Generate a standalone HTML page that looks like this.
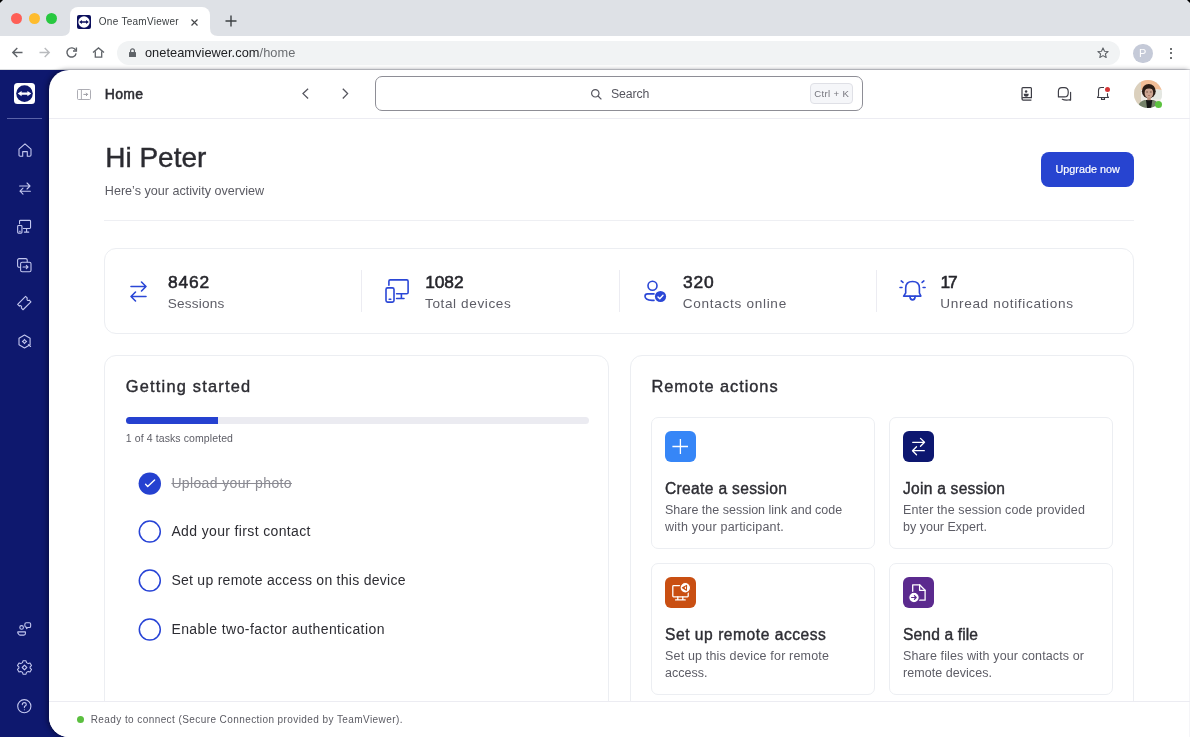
<!DOCTYPE html>
<html><head><meta charset="utf-8"><style>
*{margin:0;padding:0;box-sizing:border-box}
html,body{width:1190px;height:737px;overflow:hidden;background:#fff;font-family:"Liberation Sans",sans-serif;position:relative}
.a{position:absolute}
.t{white-space:nowrap}
svg.a{display:block;overflow:visible}
.med{-webkit-text-stroke:0.4px currentColor}
</style></head><body>
<div id="wrap" style="position:absolute;left:0;top:0;width:1190px;height:737px;will-change:transform">
<div class="a" style="left:0px;top:0px;width:1190px;height:36px;background:#dee1e6"></div>
<div class="a" style="left:0px;top:0px;width:3px;height:3px;background:#000;clip-path:polygon(0 0,100% 0,0 100%)"></div>
<div class="a" style="left:1187px;top:0px;width:3px;height:3px;background:#000;clip-path:polygon(0 0,100% 0,100% 100%)"></div>
<div class="a" style="left:11.0px;top:13px;width:11px;height:11px;background:#fe5f57;border-radius:50%"></div>
<div class="a" style="left:28.5px;top:13px;width:11px;height:11px;background:#febc2e;border-radius:50%"></div>
<div class="a" style="left:46.0px;top:13px;width:11px;height:11px;background:#28c840;border-radius:50%"></div>
<div class="a" style="left:70px;top:7px;width:140px;height:30px;background:#fff;border-radius:8px 8px 0 0"></div>
<svg class="a" style="left:62px;top:28px;" width="8" height="8" viewBox="0 0 8 8" fill="none"><path d="M0 8 Q8 8 8 0 V8 Z" fill="#fff"/></svg>
<svg class="a" style="left:210px;top:28px;" width="8" height="8" viewBox="0 0 8 8" fill="none"><path d="M8 8 Q0 8 0 0 V8 Z" fill="#fff"/></svg>
<svg class="a" style="left:77px;top:15px;" width="14" height="14" viewBox="0 0 14 14" fill="none"><rect width="14" height="14" rx="2" fill="#0b0f5c"/><circle cx="7" cy="7" r="5.7" fill="#fff"/><path d="M2.2 7 L4.9 4.9 V6.2 H9.1 V4.9 L11.8 7 L9.1 9.1 V7.8 H4.9 V9.1 Z" fill="#0b0f5c"/></svg>
<div class="a t " style="left:98.8px;top:16.84px;font-size:10px;line-height:10px;color:#3c4043;font-weight:400;letter-spacing:0.27px;">One TeamViewer</div>
<svg class="a" style="left:191px;top:19px;" width="7" height="7" viewBox="0 0 7 7" fill="none"><path d="M0.5 0.5 L6.5 6.5 M6.5 0.5 L0.5 6.5" stroke="#45474a" stroke-width="1.2"/></svg>
<svg class="a" style="left:225px;top:15px;" width="12" height="12" viewBox="0 0 12 12" fill="none"><path d="M6 0.5 V11.5 M0.5 6 H11.5" stroke="#3c4043" stroke-width="1.4"/></svg>
<div class="a" style="left:0px;top:36px;width:1190px;height:33px;background:#fff"></div>
<div class="a" style="left:0px;top:69px;width:1190px;height:1px;background:#dadcdf"></div>
<svg class="a" style="left:12px;top:47px;" width="11" height="11" viewBox="0 0 11 11" fill="none"><path d="M10.5 5.5 H1 M5.3 1 L0.8 5.5 L5.3 10" stroke="#5f6368" stroke-width="1.4"/></svg>
<svg class="a" style="left:39px;top:47px;" width="11" height="11" viewBox="0 0 11 11" fill="none"><path d="M0.5 5.5 H10 M5.7 1 L10.2 5.5 L5.7 10" stroke="#b9bbbe" stroke-width="1.4"/></svg>
<svg class="a" style="left:66px;top:47px;" width="11" height="11" viewBox="0 0 11 11" fill="none"><path d="M9.6 3.2 A4.6 4.6 0 1 0 10.1 6.3" stroke="#5f6368" stroke-width="1.4"/><path d="M10.4 0.6 V4 H7" stroke="#5f6368" stroke-width="1.4"/></svg>
<svg class="a" style="left:92px;top:47px;" width="13" height="12" viewBox="0 0 13 12" fill="none"><path d="M1 5.6 L6.5 0.9 L12 5.6" stroke="#5f6368" stroke-width="1.3"/><path d="M3.3 4.2 V10.1 H9.7 V4.2" stroke="#5f6368" stroke-width="1.3"/></svg>
<div class="a" style="left:117px;top:41px;width:1002.5px;height:24px;background:#f1f3f4;border-radius:12px"></div>
<svg class="a" style="left:129px;top:48px;" width="7" height="9" viewBox="0 0 7 9" fill="none"><path d="M1.6 4 V2.8 A1.9 1.9 0 0 1 5.4 2.8 V4" stroke="#5f6368" stroke-width="1.2"/><rect x="0" y="4" width="7" height="5" rx="0.6" fill="#5f6368"/></svg>
<div class="a t " style="left:144.9px;top:47.16px;font-size:12.8px;line-height:12.8px;color:#202124;font-weight:400;letter-spacing:0.05px;">oneteamviewer.com<span style="color:#6b6e72">/home</span></div>
<svg class="a" style="left:1097px;top:47px;" width="12" height="12" viewBox="0 0 12 12" fill="none"><path d="M6 0.9 L7.5 4.2 L11.1 4.5 L8.4 6.9 L9.2 10.5 L6 8.6 L2.8 10.5 L3.6 6.9 L0.9 4.5 L4.5 4.2 Z" stroke="#5f6368" stroke-width="1.1" stroke-linejoin="round"/></svg>
<div class="a" style="left:1133.2px;top:43.5px;width:19.5px;height:19.5px;background:#c5cad8;border-radius:50%"></div>
<div class="a t " style="left:1138.9px;top:47.99px;font-size:11px;line-height:11px;color:#fff;font-weight:400;letter-spacing:0px;">P</div>
<div class="a" style="left:1169.5px;top:47.5px;width:2px;height:2px;background:#3c4043;border-radius:50%"></div>
<div class="a" style="left:1169.5px;top:52px;width:2px;height:2px;background:#3c4043;border-radius:50%"></div>
<div class="a" style="left:1169.5px;top:56.5px;width:2px;height:2px;background:#3c4043;border-radius:50%"></div>
<div class="a" style="left:0px;top:70px;width:100px;height:667px;background:#0e186e"></div>
<svg class="a" style="left:14px;top:83px;" width="21" height="21" viewBox="0 0 21 21" fill="none"><rect width="21" height="21" rx="3.5" fill="#fff"/><circle cx="10.5" cy="10.6" r="8.3" fill="#0e186e"/><path d="M3.7 10.6 L7.6 7.9 V9.4 H13.4 V7.9 L17.3 10.6 L13.4 13.3 V11.8 H7.6 V13.3 Z" fill="#fff"/></svg>
<div class="a" style="left:7px;top:118px;width:35px;height:1px;background:#5a62a8"></div>
<svg class="a" style="left:17.5px;top:142.5px;" width="14" height="14" viewBox="0 0 14 14" fill="none"><path d="M1 6.2 L7 0.8 L13 6.2 V12 Q13 13.2 11.8 13.2 H9.3 V8.6 H4.7 V13.2 H2.2 Q1 13.2 1 12 Z" stroke="#c3c7ef" stroke-width="1.1" stroke-linecap="round" stroke-linejoin="round"/></svg>
<svg class="a" style="left:18.5px;top:182px;" width="12" height="13" viewBox="0 0 12 13" fill="none"><path d="M0.6 4 H11 M8 1 L11 4 L8 7 M11.4 9.2 H1 M4 6.2 L1 9.2 L4 12.2" stroke="#c3c7ef" stroke-width="1.1" stroke-linecap="round" stroke-linejoin="round"/></svg>
<svg class="a" style="left:17px;top:219px;" width="16" height="16" viewBox="0 0 16 16" fill="none"><path d="M2.55 4.8 V2.2 Q2.55 1.35 3.4 1.35 H12.7 Q13.55 1.35 13.55 2.2 V8.6 Q13.55 9.45 12.7 9.45 H6.3" stroke="#c3c7ef" stroke-width="1.1" stroke-linecap="round" stroke-linejoin="round"/><path d="M9.6 9.6 V12.9 M7.4 13.1 H11.8" stroke="#c3c7ef" stroke-width="1.1" stroke-linecap="round" stroke-linejoin="round"/><rect x="0.65" y="6.55" width="4.3" height="7.6" rx="0.9" stroke="#c3c7ef" stroke-width="1.1" stroke-linecap="round" stroke-linejoin="round"/><path d="M2.3 12.3 H3.3" stroke="#c3c7ef" stroke-width="1.1" stroke-linecap="round" stroke-linejoin="round"/></svg>
<svg class="a" style="left:17px;top:258px;" width="15" height="15" viewBox="0 0 15 15" fill="none"><rect x="0.6" y="0.6" width="9.6" height="8.6" rx="1.5" stroke="#c3c7ef" stroke-width="1.1" stroke-linecap="round" stroke-linejoin="round"/><rect x="3.6" y="4.2" width="10.4" height="9.6" rx="1.5" fill="#0e186e" stroke="#c3c7ef" stroke-width="1.1" stroke-linecap="round" stroke-linejoin="round"/><path d="M6 9 H11 M9.3 7.3 L11 9 L9.3 10.7" stroke="#c3c7ef" stroke-width="1.1" stroke-linecap="round" stroke-linejoin="round"/></svg>
<svg class="a" style="left:16px;top:295px;" width="16" height="16" viewBox="0 0 16 16" fill="none"><path transform="translate(8.3 8.1) rotate(-45)" d="M-5.6 -3.8 H5.6 V-1.3 A1.3 1.3 0 0 0 5.6 1.3 V3.8 H-5.6 V1.3 A1.3 1.3 0 0 0 -5.6 -1.3 Z" stroke="#c3c7ef" stroke-width="1.1" stroke-linecap="round" stroke-linejoin="round"/></svg>
<svg class="a" style="left:18px;top:334px;" width="14" height="16" viewBox="0 0 14 16" fill="none"><path d="M6.5 1 L12.1 4.2 V10.8 L6.5 14 L1 10.8 V4.2 Z" stroke="#c3c7ef" stroke-width="1.1" stroke-linecap="round" stroke-linejoin="round"/><path d="M6.5 5.4 Q7.2 6.8 8.6 7.5 Q7.2 8.2 6.5 9.6 Q5.8 8.2 4.4 7.5 Q5.8 6.8 6.5 5.4 Z" stroke="#c3c7ef" stroke-width="1.1" stroke-linecap="round" stroke-linejoin="round"/><path d="M10.4 10.6 L12.6 12.5" stroke="#c3c7ef" stroke-width="1.1" stroke-linecap="round" stroke-linejoin="round"/></svg>
<svg class="a" style="left:17px;top:621px;" width="15" height="15" viewBox="0 0 15 15" fill="none"><circle cx="4.6" cy="6.4" r="1.8" stroke="#c3c7ef" stroke-width="1.1" stroke-linecap="round" stroke-linejoin="round"/><path d="M0.8 10.9 H8.4 V12.6 Q8.4 14.1 6.9 14.1 H3 Q2.2 14.1 1.7 13.3 L0.8 11.9 Z" stroke="#c3c7ef" stroke-width="1.1" stroke-linecap="round" stroke-linejoin="round"/><path d="M9.4 1.75 H12.3 Q13.65 1.75 13.65 3.1 V5.2 Q13.65 6.55 12.3 6.55 H10.6 L9.6 7.6 V6.4 Q7.85 6 7.85 4.4 V3.3 Q7.85 1.75 9.4 1.75 Z" stroke="#c3c7ef" stroke-width="1.1" stroke-linecap="round" stroke-linejoin="round"/></svg>
<svg class="a" style="left:17px;top:660px;" width="15" height="15" viewBox="0 0 15 15" fill="none"><path d="M6 0.8 H9 L9.5 2.6 L11.2 3.6 L13 3 L14.5 5.6 L13.1 6.9 V8.1 L14.5 9.4 L13 12 L11.2 11.4 L9.5 12.4 L9 14.2 H6 L5.5 12.4 L3.8 11.4 L2 12 L0.5 9.4 L1.9 8.1 V6.9 L0.5 5.6 L2 3 L3.8 3.6 L5.5 2.6 Z" stroke="#c3c7ef" stroke-width="1.1" stroke-linecap="round" stroke-linejoin="round"/><path d="M7.5 5.2 L9.8 7.5 L7.5 9.8 L5.2 7.5 Z" stroke="#c3c7ef" stroke-width="1.1" stroke-linecap="round" stroke-linejoin="round"/></svg>
<svg class="a" style="left:17px;top:699px;" width="15" height="15" viewBox="0 0 15 15" fill="none"><circle cx="7.3" cy="7.2" r="6.6" stroke="#c3c7ef" stroke-width="1.1" stroke-linecap="round" stroke-linejoin="round"/><path d="M5.3 5.6 Q5.3 3.6 7.3 3.6 Q9.3 3.6 9.3 5.4 Q9.3 6.6 7.4 7.4 V8.6" stroke="#c3c7ef" stroke-width="1.1" stroke-linecap="round" stroke-linejoin="round"/><circle cx="7.4" cy="10.8" r="0.5" fill="#c3c7ef"/></svg>
<div class="a" style="left:49px;top:70px;width:1141px;height:667px;background:#fff;border-radius:20px 0 0 20px;box-shadow:-2px 0 5px rgba(0,0,20,.45)"></div>
<div class="a" style="left:1189px;top:70px;width:1px;height:667px;background:#f5f5f8"></div>
<div class="a" style="left:49px;top:118px;width:1141px;height:1px;background:#ececf2"></div>
<svg class="a" style="left:77px;top:88.5px;" width="14" height="11" viewBox="0 0 14 11" fill="none"><rect x="0.5" y="0.5" width="13" height="10" rx="1" stroke="#a4a4ac" stroke-width="0.9"/><path d="M4.4 0.5 V10.5" stroke="#a4a4ac" stroke-width="0.9"/><path d="M6.4 5.4 H10.6 M9 3.8 L10.6 5.4 L9 7" stroke="#8e8e96" stroke-width="0.9"/></svg>
<div class="a t " style="left:104.8px;top:86.55px;font-size:14px;line-height:14px;color:#2d2d33;font-weight:400;letter-spacing:0.3px;-webkit-text-stroke:0.5px #2d2d33">Home</div>
<svg class="a" style="left:301.5px;top:88px;" width="7" height="11" viewBox="0 0 7 11" fill="none"><path d="M6.1 0.7 L1 5.6 L6.1 10.5" stroke="#55555e" stroke-width="1.3"/></svg>
<svg class="a" style="left:341.5px;top:88px;" width="7" height="11" viewBox="0 0 7 11" fill="none"><path d="M0.8 0.7 L5.6 5.6 L0.8 10.5" stroke="#55555e" stroke-width="1.3"/></svg>
<div class="a" style="left:375px;top:76px;width:488px;height:35px;border:1px solid #8e8e96;border-radius:7px;background:#fff"></div>
<svg class="a" style="left:590.5px;top:88.5px;" width="11" height="11" viewBox="0 0 11 11" fill="none"><circle cx="4.3" cy="4.3" r="3.7" stroke="#55555e" stroke-width="1.2"/><path d="M7 7 L10.4 10.4" stroke="#55555e" stroke-width="1.2"/></svg>
<div class="a t " style="left:610.9px;top:87.59px;font-size:12.3px;line-height:12.3px;color:#55555e;font-weight:400;letter-spacing:-0.1px;">Search</div>
<div class="a" style="left:810px;top:83px;width:42.5px;height:21px;border:1px solid #dfe0e6;border-radius:4px;background:#f5f6f9"></div>
<div class="a t " style="left:814.2px;top:89.27px;font-size:9.6px;line-height:9.6px;color:#75757d;font-weight:400;letter-spacing:0.35px;">Ctrl + K</div>
<svg class="a" style="left:1021px;top:87px;" width="11" height="14" viewBox="0 0 11 14" fill="none"><path d="M1 12 V1.5 Q1 0.6 1.9 0.6 H9.6 Q10.4 0.6 10.4 1.5 V10.6 H2.2 Q1 10.6 1 11.8 Q1 13.2 2.2 13.2 H10.4" stroke="#3d3d45" stroke-width="1.2"/><circle cx="5.1" cy="4.5" r="1.25" fill="#3d3d45"/><path d="M2.7 6.8 H7.7 Q7.7 9.8 5.2 9.8 Q2.7 9.8 2.7 6.8 Z" fill="#3d3d45"/></svg>
<svg class="a" style="left:1057px;top:87px;" width="15" height="15" viewBox="0 0 15 15" fill="none"><path d="M1.4 9.9 V4.3 Q1.4 0.6 5 0.6 H7.4 Q11.2 0.6 11.2 4.6 V5.9 Q11.2 9.9 7.4 9.9 Z" stroke="#3d3d45" stroke-width="1.15" stroke-linejoin="round"/><path d="M13.6 5.2 V12.9 Q13.6 13.3 13.1 13.2 L12.4 12.7 Q11.4 13.1 9.6 13.1 Q6.9 13.1 5.3 12.3" stroke="#3d3d45" stroke-width="1.15" stroke-linecap="round" stroke-linejoin="round"/></svg>
<svg class="a" style="left:1096px;top:86px;" width="15" height="15" viewBox="0 0 15 15" fill="none"><path d="M8 1.5 H5.2 Q2.5 1.5 2.5 4.4 V9.8 L1.5 11.5 H12.5 L11.5 10.2 V7.3" stroke="#3d3d45" stroke-width="1.1" stroke-linejoin="round"/><path d="M5.5 11.5 V13.4 H8.5 V11.5" stroke="#3d3d45" stroke-width="1.1"/></svg>
<div class="a" style="left:1104.6px;top:86.6px;width:5.6px;height:5.6px;background:#d43535;border-radius:50%"></div>
<svg class="a" style="left:1134px;top:80px;" width="28" height="28" viewBox="0 0 28 28" fill="none"><defs><clipPath id="av"><circle cx="14" cy="14" r="14"/></clipPath></defs>
<g clip-path="url(#av)"><rect width="28" height="28" fill="#eeebe5"/><rect x="0" y="0" width="7" height="24" fill="#dbd0bd"/><path d="M7 0 H28 V10 Q20 8 7 10 Z" fill="#f2bd96"/><rect x="19" y="10" width="9" height="9" fill="#e4e7e2"/>
<path d="M3 28 Q5 21.5 10.5 20 H19.5 Q24 21 26 28 Z" fill="#748169"/><path d="M12 20 H18.3 L17.2 28 H13 Z" fill="#141414"/>
<ellipse cx="14.8" cy="11.2" rx="6.9" ry="7.3" fill="#2a1c15"/>
<ellipse cx="14.9" cy="12.9" rx="4.3" ry="5.6" fill="#cca592"/><path d="M10.6 9.8 Q15 7.4 19.2 9.6 Q18.6 6.6 14.9 6.4 Q11.2 6.6 10.6 9.8 Z" fill="#2a1c15"/><rect x="13.2" y="17.6" width="3.6" height="2.6" fill="#b98f7a"/><path d="M12.2 12 H14 M15.9 12 H17.7" stroke="#6e5044" stroke-width="0.9"/><path d="M14 15.6 H16" stroke="#a8705e" stroke-width="0.8"/></g></svg>
<div class="a" style="left:1155px;top:101px;width:7px;height:7px;background:#5cc23f;border-radius:50%"></div>
<div class="a t " style="left:105.2px;top:143.70px;font-size:28px;line-height:28px;color:#2b2b31;font-weight:400;letter-spacing:0px;-webkit-text-stroke:0.4px #2b2b31">Hi Peter</div>
<div class="a t " style="left:104.8px;top:184.93px;font-size:12.6px;line-height:12.6px;color:#5b5b63;font-weight:400;letter-spacing:0px;">Here’s your activity overview</div>
<div class="a" style="left:1041px;top:152px;width:93px;height:35px;background:#2744d0;border-radius:8px"></div>
<div class="a t " style="left:1055.5px;top:163.86px;font-size:10.8px;line-height:10.8px;color:#fff;font-weight:400;letter-spacing:0px;-webkit-text-stroke:0.2px #fff">Upgrade now</div>
<div class="a" style="left:104px;top:220px;width:1030px;height:1px;background:#eeeff3"></div>
<div class="a" style="left:104px;top:248px;width:1030px;height:86px;border:1px solid #eceef2;border-radius:12px;background:#fff"></div>
<div class="a" style="left:361px;top:270px;width:1px;height:42px;background:#ececf2"></div>
<div class="a" style="left:619px;top:270px;width:1px;height:42px;background:#ececf2"></div>
<div class="a" style="left:876px;top:270px;width:1px;height:42px;background:#ececf2"></div>
<svg class="a" style="left:129.8px;top:280.5px;" width="17" height="21" viewBox="0 0 17 21" fill="none"><path d="M1 5.5 H16 M11.5 1 L16 5.5 L11.5 10 M16 15.5 H1 M5.5 11 L1 15.5 L5.5 20" stroke="#2b47d6" stroke-width="1.6" stroke-linecap="round" stroke-linejoin="round"/></svg>
<svg class="a" style="left:384px;top:278px;" width="26" height="26" viewBox="0 0 26 26" fill="none"><path d="M4.9 7.2 V3.2 Q4.9 1.9 6.2 1.9 H22.8 Q24.1 1.9 24.1 3.2 V14.4 Q24.1 15.7 22.8 15.7 H12.6" stroke="#2b47d6" stroke-width="1.6" stroke-linecap="round" stroke-linejoin="round"/><path d="M17.4 15.9 V20.3 M12.6 20.5 H20" stroke="#2b47d6" stroke-width="1.6" stroke-linecap="round" stroke-linejoin="round"/><rect x="2" y="9.9" width="8" height="14.2" rx="1.6" stroke="#2b47d6" stroke-width="1.6" stroke-linecap="round" stroke-linejoin="round"/><path d="M5.2 21.3 H6.8" stroke="#2b47d6" stroke-width="1.6" stroke-linecap="round" stroke-linejoin="round"/></svg>
<svg class="a" style="left:643px;top:280px;" width="24" height="24" viewBox="0 0 24 24" fill="none"><circle cx="9.5" cy="5.7" r="4.5" stroke="#2b47d6" stroke-width="1.6" stroke-linecap="round" stroke-linejoin="round"/><path d="M11 13.9 H4.6 Q2 13.9 2 16.2 Q2 20 9 20.4 H11" stroke="#2b47d6" stroke-width="1.6" stroke-linecap="round" stroke-linejoin="round"/><circle cx="17.5" cy="16.5" r="5.6" fill="#2b47d6"/><path d="M15 16.9 L16.8 18.7 L20 15.2" stroke="#fff" stroke-width="1.4" stroke-linecap="round" stroke-linejoin="round"/></svg>
<svg class="a" style="left:897px;top:278px;" width="30" height="25" viewBox="0 0 30 25" fill="none"><path d="M6.6 18.1 H23.9 L22.4 15 V10 Q22.4 3.5 15.55 3.5 Q8.7 3.5 8.7 10 V15 Z" stroke="#2b47d6" stroke-width="1.6" stroke-linecap="round" stroke-linejoin="round"/><path d="M12.9 18.4 Q13.1 21.9 15.55 21.9 Q18 21.9 18.2 18.4" stroke="#2b47d6" stroke-width="1.6" stroke-linecap="round" stroke-linejoin="round"/><path d="M4.2 2.9 L6 4.4 M26.9 2.9 L25.1 4.4 M3 9.5 H5 M26.1 9.5 H28.1" stroke="#2b47d6" stroke-width="1.6" stroke-linecap="round" stroke-linejoin="round"/></svg>
<div class="a t " style="left:168.0px;top:273.87px;font-size:17.4px;line-height:17.4px;color:#26262c;font-weight:400;letter-spacing:0.8px;-webkit-text-stroke:0.55px #26262c">8462</div>
<div class="a t " style="left:167.8px;top:296.99px;font-size:13.6px;line-height:13.6px;color:#5d5d66;font-weight:400;letter-spacing:0.2px;">Sessions</div>
<div class="a t " style="left:425.2px;top:273.87px;font-size:17.4px;line-height:17.4px;color:#26262c;font-weight:400;letter-spacing:-0.1px;-webkit-text-stroke:0.55px #26262c">1082</div>
<div class="a t " style="left:425px;top:296.99px;font-size:13.6px;line-height:13.6px;color:#5d5d66;font-weight:400;letter-spacing:0.6px;">Total devices</div>
<div class="a t " style="left:682.9000000000001px;top:273.87px;font-size:17.4px;line-height:17.4px;color:#26262c;font-weight:400;letter-spacing:0.9px;-webkit-text-stroke:0.55px #26262c">320</div>
<div class="a t " style="left:682.7px;top:296.99px;font-size:13.6px;line-height:13.6px;color:#5d5d66;font-weight:400;letter-spacing:0.7px;">Contacts online</div>
<div class="a t " style="left:940.5px;top:273.87px;font-size:17.4px;line-height:17.4px;color:#26262c;font-weight:400;letter-spacing:-2.2px;-webkit-text-stroke:0.55px #26262c">17</div>
<div class="a t " style="left:940.3px;top:296.99px;font-size:13.6px;line-height:13.6px;color:#5d5d66;font-weight:400;letter-spacing:0.66px;">Unread notifications</div>
<div class="a" style="left:104px;top:355px;width:505px;height:400px;border:1px solid #eceef2;border-radius:12px;background:#fff"></div>
<div class="a t med" style="left:125.8px;top:378.12px;font-size:16.4px;line-height:16.4px;color:#2d2d33;font-weight:400;letter-spacing:1.2px;">Getting started</div>
<div class="a" style="left:125.5px;top:417px;width:463px;height:7px;background:#ebebf1;border-radius:4px"></div>
<div class="a" style="left:125.5px;top:417px;width:92.5px;height:7px;background:#2541d0;border-radius:4px 0 0 4px"></div>
<div class="a t " style="left:125.8px;top:432.71px;font-size:10.5px;line-height:10.5px;color:#5d5d66;font-weight:400;letter-spacing:0.1px;">1 of 4 tasks completed</div>
<svg class="a" style="left:138px;top:471.5px;" width="23" height="23" viewBox="0 0 23 23" fill="none"><circle cx="11.8" cy="11.6" r="11.2" fill="#2541d0"/><path d="M7.6 12.3 L9.7 14.6 L16.6 8" stroke="#fff" stroke-width="1.4" stroke-linecap="round" stroke-linejoin="round"/></svg>
<div class="a t " style="left:171.4px;top:475.75px;font-size:14px;line-height:14px;color:#8b8b93;font-weight:400;letter-spacing:0.36px;text-decoration:line-through;text-decoration-thickness:1px">Upload your photo</div>
<svg class="a" style="left:138px;top:520.3px;" width="23" height="23" viewBox="0 0 23 23" fill="none"><circle cx="11.8" cy="11.6" r="10.5" stroke="#2743d6" stroke-width="1.5"/></svg>
<div class="a t " style="left:171.4px;top:524.35px;font-size:14px;line-height:14px;color:#2d2d33;font-weight:400;letter-spacing:0.36px;">Add your first contact</div>
<svg class="a" style="left:138px;top:568.7px;" width="23" height="23" viewBox="0 0 23 23" fill="none"><circle cx="11.8" cy="11.6" r="10.5" stroke="#2743d6" stroke-width="1.5"/></svg>
<div class="a t " style="left:171.4px;top:572.75px;font-size:14px;line-height:14px;color:#2d2d33;font-weight:400;letter-spacing:0.27px;">Set up remote access on this device</div>
<svg class="a" style="left:138px;top:617.5px;" width="23" height="23" viewBox="0 0 23 23" fill="none"><circle cx="11.8" cy="11.6" r="10.5" stroke="#2743d6" stroke-width="1.5"/></svg>
<div class="a t " style="left:171.4px;top:621.55px;font-size:14px;line-height:14px;color:#2d2d33;font-weight:400;letter-spacing:0.42px;">Enable two-factor authentication</div>
<div class="a" style="left:630px;top:355px;width:504px;height:400px;border:1px solid #eceef2;border-radius:12px;background:#fff"></div>
<div class="a t med" style="left:651.4px;top:377.72px;font-size:16.4px;line-height:16.4px;color:#2d2d33;font-weight:400;letter-spacing:0.95px;">Remote actions</div>
<div class="a" style="left:651px;top:417px;width:224px;height:132px;border:1px solid #eceef2;border-radius:7px;background:#fff"></div>
<svg class="a" style="left:665px;top:431px;" width="31" height="31" viewBox="0 0 31 31" fill="none"><rect width="31" height="31" rx="6" fill="#3686f7"/><path d="M15.4 8 V23 M7.4 15.5 H23" stroke="#fff" stroke-width="1.3"/></svg>
<div class="a t med" style="left:665px;top:480.59px;font-size:15.6px;line-height:15.6px;color:#2d2d33;font-weight:400;letter-spacing:0.33px;">Create a session</div>
<div class="a t " style="left:665px;top:504.42px;font-size:12.5px;line-height:12.5px;color:#5d5d66;font-weight:400;letter-spacing:0px;">Share the session link and code</div>
<div class="a t " style="left:665px;top:521.22px;font-size:12.5px;line-height:12.5px;color:#5d5d66;font-weight:400;letter-spacing:0.2px;">with your participant.</div>
<div class="a" style="left:889px;top:417px;width:224px;height:132px;border:1px solid #eceef2;border-radius:7px;background:#fff"></div>
<svg class="a" style="left:903px;top:431px;" width="31" height="31" viewBox="0 0 31 31" fill="none"><rect width="31" height="31" rx="6" fill="#0d1770"/><path d="M9.7 11.3 H21.3 M17.5 7.4 L21.5 11.3 L17.5 15.3 M21.3 19.7 H9.7 M13.5 15.7 L9.5 19.7 L13.5 23.7" stroke="#fff" stroke-width="1.3" stroke-linecap="round" stroke-linejoin="round"/></svg>
<div class="a t med" style="left:903px;top:480.59px;font-size:15.6px;line-height:15.6px;color:#2d2d33;font-weight:400;letter-spacing:0.24px;">Join a session</div>
<div class="a t " style="left:903px;top:504.42px;font-size:12.5px;line-height:12.5px;color:#5d5d66;font-weight:400;letter-spacing:0.11px;">Enter the session code provided</div>
<div class="a t " style="left:903px;top:521.22px;font-size:12.5px;line-height:12.5px;color:#5d5d66;font-weight:400;letter-spacing:0px;">by your Expert.</div>
<div class="a" style="left:651px;top:563px;width:224px;height:132px;border:1px solid #eceef2;border-radius:7px;background:#fff"></div>
<svg class="a" style="left:665px;top:577px;" width="31" height="31" viewBox="0 0 31 31" fill="none"><rect width="31" height="31" rx="6" fill="#c94f12"/><rect x="7.8" y="8.6" width="15.4" height="11.3" rx="0.8" stroke="#fff" stroke-width="1.3" stroke-linecap="round" stroke-linejoin="round"/><path d="M12.8 19.9 V22.9 M17.8 19.9 V22.9 M10.6 22.9 H20.2" stroke="#fff" stroke-width="1.3" stroke-linecap="round" stroke-linejoin="round"/><circle cx="20.3" cy="10.8" r="5.3" fill="#fff" stroke="#c94f12" stroke-width="1.2"/><path d="M17.4 10.8 L21.6 8.4 L21.4 13.2 Z M17.4 10.8 L20 11" stroke="#c94f12" stroke-width="1.1" stroke-linejoin="round"/></svg>
<div class="a t med" style="left:665px;top:626.59px;font-size:15.6px;line-height:15.6px;color:#2d2d33;font-weight:400;letter-spacing:0.53px;">Set up remote access</div>
<div class="a t " style="left:665px;top:650.42px;font-size:12.5px;line-height:12.5px;color:#5d5d66;font-weight:400;letter-spacing:0.17px;">Set up this device for remote</div>
<div class="a t " style="left:665px;top:667.22px;font-size:12.5px;line-height:12.5px;color:#5d5d66;font-weight:400;letter-spacing:0px;">access.</div>
<div class="a" style="left:889px;top:563px;width:224px;height:132px;border:1px solid #eceef2;border-radius:7px;background:#fff"></div>
<svg class="a" style="left:903px;top:577px;" width="31" height="31" viewBox="0 0 31 31" fill="none"><rect width="31" height="31" rx="6" fill="#5b2a8e"/><path d="M9.7 15 V7.8 H16.6 L22.1 13.3 V23.2 H15.8" stroke="#fff" stroke-width="1.3" stroke-linecap="round" stroke-linejoin="round"/><path d="M16.6 7.8 V13.3 H22.1" stroke="#fff" stroke-width="1.3" stroke-linecap="round" stroke-linejoin="round"/><circle cx="11" cy="20.5" r="5.3" fill="#fff" stroke="#5b2a8e" stroke-width="1.2"/><path d="M8.6 20.5 H13.2 M11.4 18.7 L13.2 20.5 L11.4 22.3" stroke="#5b2a8e" stroke-width="1.2" stroke-linecap="round" stroke-linejoin="round"/></svg>
<div class="a t med" style="left:903px;top:626.59px;font-size:15.6px;line-height:15.6px;color:#2d2d33;font-weight:400;letter-spacing:0.13px;">Send a file</div>
<div class="a t " style="left:903px;top:650.42px;font-size:12.5px;line-height:12.5px;color:#5d5d66;font-weight:400;letter-spacing:0.12px;">Share files with your contacts or</div>
<div class="a t " style="left:903px;top:667.22px;font-size:12.5px;line-height:12.5px;color:#5d5d66;font-weight:400;letter-spacing:0.05px;">remote devices.</div>
<div class="a" style="left:49px;top:701px;width:1140px;height:36px;background:#fff;border-bottom-left-radius:20px"></div>
<div class="a" style="left:49px;top:701px;width:1141px;height:1px;background:#ececf2"></div>
<div class="a" style="left:77px;top:716px;width:7px;height:7px;background:#5bbf3f;border-radius:50%"></div>
<div class="a t " style="left:90.7px;top:715.13px;font-size:10px;line-height:10px;color:#5b5b63;font-weight:400;letter-spacing:0.42px;">Ready to connect (Secure Connection provided by TeamViewer).</div>
</div>
</body></html>
